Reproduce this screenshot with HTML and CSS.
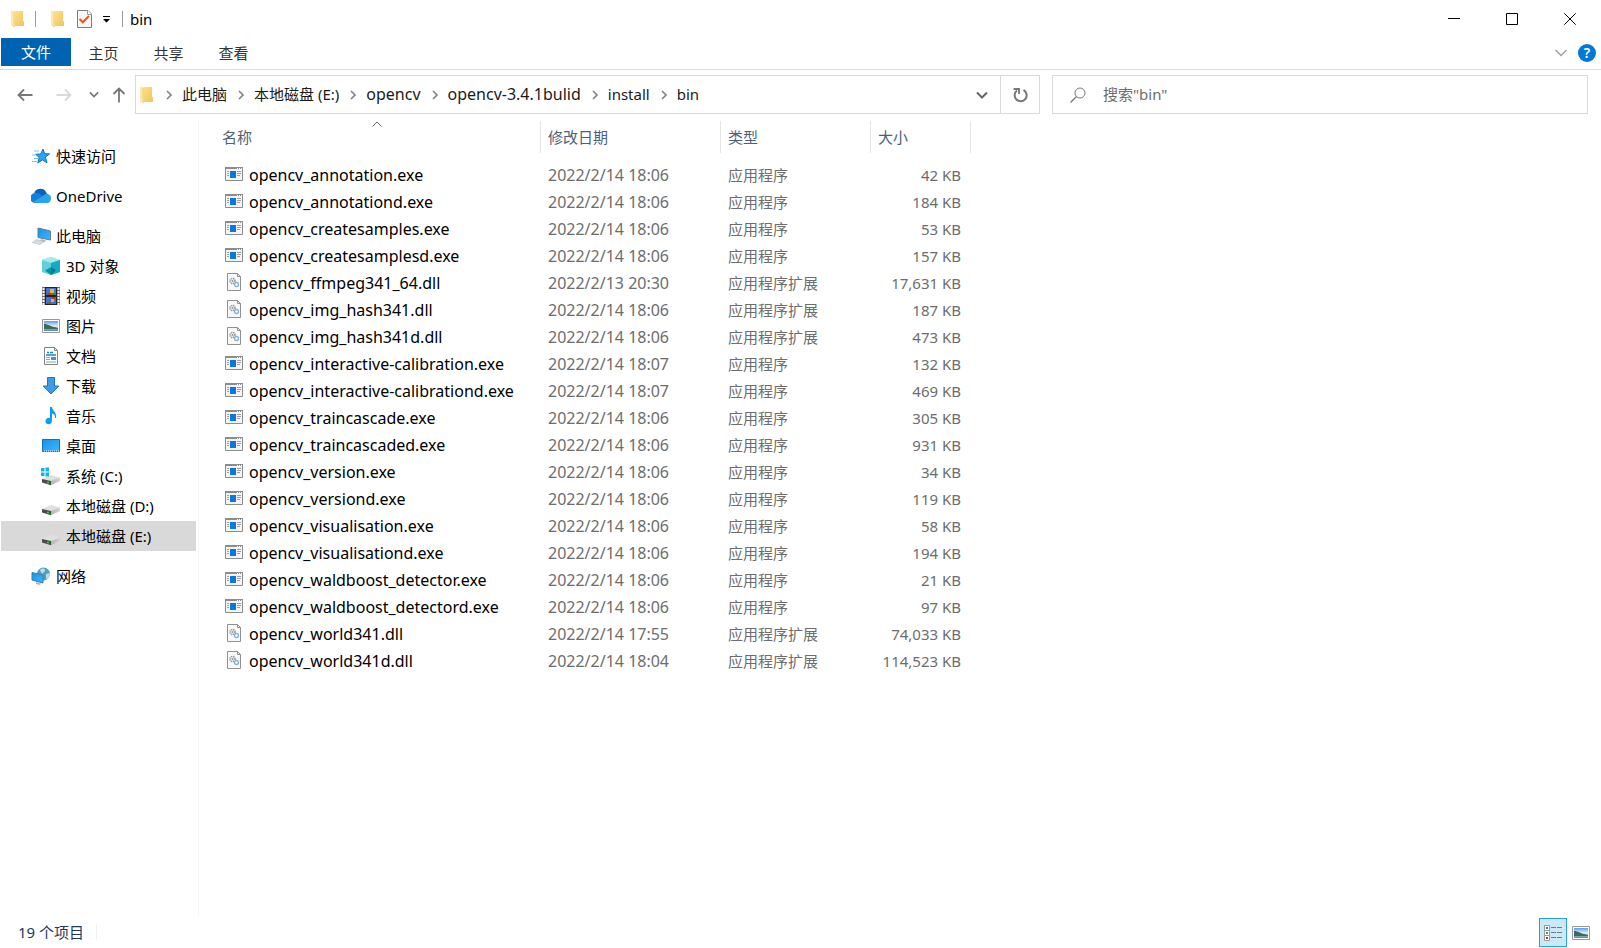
FILE: index.html
```html
<!DOCTYPE html>
<html lang="zh-CN">

<head>
    <meta charset="UTF-8">
    <meta name="viewport" content="width=device-width, initial-scale=1.0">
    <title>bin</title>
    <link rel="stylesheet" href="styles.css">
</head>

<body>
    <!-- 图标 -->
    <svg class="sprite" aria-hidden="true">
        <defs>
            <linearGradient id="gold" x1="0" x2="1" y2="1">
                <stop offset="0" stop-color="#ffe08a" />
                <stop offset="1" stop-color="#eec460" />
            </linearGradient>
            <linearGradient id="sky" x1="0" x2="1" y2="1">
                <stop offset="0" stop-color="#1590ee" />
                <stop offset="1" stop-color="#3fb8fb" />
            </linearGradient>
            <linearGradient id="metal" x1="0" x2="1">
                <stop offset="0" stop-color="#b5b5b5" />
                <stop offset="1" stop-color="#d2d2d2" />
            </linearGradient>
            <linearGradient id="view" x2="0" y2="1">
                <stop offset="0" stop-color="#5b9bea" />
                <stop offset="0.5" stop-color="#dff1fb" />
                <stop offset="1" stop-color="#4b86a8" />
            </linearGradient>
        </defs>
        <symbol id="folder" viewBox="0 0 13 18">
            <path d="M3 1h9v10l1 .6V16H3z" fill="url(#gold)" />
            <path d="M0 0l3.500 2v16L0 15.500z" fill="#ffe9a8" />
            <path d="M3 2v15" stroke="#e9c56c" stroke-width=".6" />
        </symbol>
        <symbol id="check" viewBox="0 0 15 18">
            <path d="M.5.5h10.500l3.500 3.500v13.500H.5z" fill="#f6f6f6" stroke="#7d7d7d" />
            <path d="M10.500.5v4h4" fill="#fff" stroke="#9a9a9a" />
            <path d="M2.500 9l3.300 3.300L12 6" fill="none" stroke="#f0590f" stroke-width="2" />
        </symbol>
        <symbol id="chev-right" viewBox="0 0 6 10">
            <path d="M1 1l4 4-4 4" fill="none" stroke="#858585" stroke-width="1.700" />
        </symbol>
        <symbol id="chev-down" viewBox="0 0 12 8">
            <path d="M1 1.500l5 5 5-5" fill="none" stroke="currentColor" stroke-width="2" />
        </symbol>
        <symbol id="arrow" viewBox="0 0 16 14">
            <path d="M15.500 7H1.500M7 1.500L1.500 7 7 12.500" fill="none" stroke="currentColor" stroke-width="1.800" />
        </symbol>
        <symbol id="star" viewBox="0 0 20 20">
            <path d="M12 3l1.600 4.700 5 .1-4.200 3.400 1.600 5.600-4.600-2.900-4.600 3.100 1.400-5.400-3.500-3.300 5-.3z" fill="#2ba2f3" stroke="#1076be" />
            <path d="M3 5h5M1 9h4M3 12.500h4M1 15.500h5" stroke="#7cc7f7" />
        </symbol>
        <symbol id="cloud" viewBox="0 0 20 20">
            <path d="M3 8a6.500 6.500 0 0 1 12.500-1l3.500 4-8 2-8-3z" fill="#0b62b8" />
            <path d="M4.500 17a5 5 0 0 1-.5-10c3-.6 5 .5 8 3l-6 7z" fill="#1180d6" />
            <path d="M2 16l10-6c2.500-3.500 8-2 8 2 0 3-1.500 5-4 5H4.500z" fill="#29a4ee" />
        </symbol>
        <symbol id="pc" viewBox="0 0 20 20">
            <path d="M7 2l12.500 3v9L7 11.500z" fill="url(#sky)" stroke="#5c7f98" />
            <path d="M10 13l5 1.500-1 1.500-5-1z" fill="#aeb8bf" />
            <path d="M6 13.500l7 2.500-4 2.500-8-2z" fill="#d5dadd" stroke="#b7bfc5" stroke-width=".6" />
        </symbol>
        <symbol id="cube" viewBox="0 0 20 20">
            <path d="M10 1l9 3v12l-9 3-9-3V4z" fill="#5fd0dc" />
            <path d="M10 1l9 3-9 3-9-3z" fill="#a6e8ee" />
            <path d="M19 4l-9 3v12l9-3z" fill="#12adc4" />
            <path d="M10 11l-6 3.500 6 4.500z" fill="#0a93a8" />
            <path d="M10 11l5 3-5 5z" fill="#067a90" />
        </symbol>
        <symbol id="film" viewBox="0 0 20 20">
            <path d="M1 1h18v18H1z" fill="#6b6b6b" />
            <path d="M2.500 2v17M17.500 2v17" stroke="#f4f4f4" stroke-width="2" stroke-dasharray="2 1" />
            <path d="M4 1h12v18H4z" fill="#222" />
            <path d="M5 2h10v7H5zM5 11h10v7H5z" fill="#4670d8" />
            <path d="M9 3h4v4H9zM10 13h3v3h-3z" fill="#e5b92b" />
            <path d="M6 7h4v2H6zM11 11h3v2h-3z" fill="#b5372b" />
            <path d="M11 7h3v2h-3zM6 16h4v2H6z" fill="#4c7740" />
        </symbol>
        <symbol id="photo" viewBox="0 0 20 20">
            <path d="M1.500 3.500h17v13h-17z" fill="#fff" stroke="#989898" />
            <path d="M3 5h14v10H3z" fill="url(#view)" />
            <path d="M3 8c3-.5 5 2 14 4v1H3z" fill="#3d6b58" />
        </symbol>
        <symbol id="doc" viewBox="0 0 20 20">
            <path d="M3.500 1.500h10l3 3v14h-13z" fill="#fff" stroke="#848484" />
            <path d="M13.500 1.500v3h3" fill="none" stroke="#848484" />
            <path d="M6 6.500h2M9 6.500h3M5 9h10" stroke="#1784cf" stroke-width="1.500" />
            <path d="M5 11.500h4M5 13.500h4M5 16h10" stroke="#8d9ca8" />
            <path d="M10 11h5v3h-5z" fill="#3f97c9" />
        </symbol>
        <symbol id="down" viewBox="0 0 20 20">
            <path d="M6.500 1.500h7V10h4.300L10 18 2.200 10h4.300z" fill="#3f9be9" stroke="#1f74bd" />
        </symbol>
        <symbol id="note" viewBox="0 0 20 20">
            <path d="M9 1h2c.5 4 5 5 4 11h-1c.3-3-1-4-3-4.500v7C11 20 4 19 4.500 15c.5-3 3-3.500 4.500-3z" fill="#0e9bf5" />
        </symbol>
        <symbol id="desk" viewBox="0 0 20 20">
            <path d="M1.500 3.500h17v12h-17z" fill="url(#sky)" stroke="#0b73bf" />
            <path d="M3 15h11M15 15h3" stroke="#fff" stroke-dasharray="1 1" />
        </symbol>
        <symbol id="disk" viewBox="0 0 20 20">
            <path d="M1 13L10 9l9 2.500L10 16z" fill="#e0e0e0" />
            <path d="M1 13l9 2v4.200L1 16.500z" fill="#4b4b4b" />
            <path d="M10 15l9-3.500v3.500l-9 4.200z" fill="url(#metal)" />
            <path d="M6 16.500h2" stroke="#35d648" stroke-width="1.500" />
        </symbol>
        <symbol id="windisk" viewBox="0 0 20 20">
            <use href="#disk" />
            <path d="M0 2h3.500v3.500H0zM4.500 1.500H8v4H4.500zM0 6.500h3.500V10H0zM4.500 6.500H8v4H4.500z" fill="#12b4ea" />
        </symbol>
        <symbol id="net" viewBox="0 0 20 20">
            <circle cx="12.500" cy="8" r="6.500" fill="#4f9cc4" />
            <path d="M9 4c3-3 6-1 5 1l-3 3zM15 8l4-1c0 4-2 6-4 6z" fill="#b9dcea" />
            <path d="M1 6.500l11 2.500v8L1 14z" fill="url(#sky)" stroke="#3a7fae" />
            <path d="M5 16l5 1.500-1 1.500-4-1z" fill="#adb6bc" />
        </symbol>
        <symbol id="exe" viewBox="0 0 18 14">
            <path d="M.5.5h17v13H.5z" fill="#f4f4f4" stroke="#8a8d90" />
            <path d="M0 1h18" stroke="#8a8d90" stroke-width="2" />
            <path d="M12 1.500h1M14 1.500h1M16 1.500h1" stroke="#fff" />
            <path d="M5 4h6v7H5z" fill="#0a78dc" />
            <path d="M2 4.500h2M2 6.500h2M2 8.500h2M12 4.500h4M12 6.500h4M12 8.500h3" stroke="#9da0a3" />
        </symbol>
        <symbol id="dll" viewBox="0 0 18 18">
            <path d="M2.500.5h10l3 3v14h-13z" fill="#f8f8f8" stroke="#909090" />
            <path d="M12.500.5v3h3" fill="none" stroke="#909090" />
            <circle cx="7.500" cy="8" r="2.500" fill="none" stroke="#8b969e" stroke-width="1.500" stroke-dasharray="1.300 .7" />
            <circle cx="7.500" cy="8" r="1" fill="#8b969e" />
            <circle cx="11.500" cy="11.500" r="2" fill="#fff" stroke="#86b1d0" stroke-width="1.300" />
        </symbol>
    </svg>

    <header class="titlebar">
        <svg class="folder"><use href="#folder" /></svg>
        <i class="line"></i>
        <button class="folder" aria-label="新建文件夹"><svg><use href="#folder" /></svg></button>
        <button class="check" aria-label="属性"><svg><use href="#check" /></svg></button>
        <button class="custom" aria-label="自定义快速访问工具栏">
            <svg viewBox="0 0 7 7"><path d="M0 0h7v1H0zM0 3h7L3.500 6.500z" /></svg>
        </button>
        <i class="line"></i>
        <h1>bin</h1>
        <div class="controls">
            <button aria-label="最小化"><svg viewBox="0 0 12 12"><path d="M0 5.500h12" /></svg></button>
            <button aria-label="最大化"><svg viewBox="0 0 12 12"><path d="M.5.5h11v11H.5z" /></svg></button>
            <button aria-label="关闭"><svg viewBox="0 0 12 12"><path d="M.3.3l11.400 11.400M11.700.3L.3 11.700" /></svg></button>
        </div>
    </header>

    <nav class="ribbon">
        <button class="file">文件</button>
        <button>主页</button>
        <button>共享</button>
        <button>查看</button>
        <div class="right">
            <button class="expand" aria-label="展开功能区">
                <svg viewBox="0 0 12 8"><path d="M.5 1L6 6.500 11.500 1" fill="none" stroke="#a0a0a0" stroke-width="1.500" /></svg>
            </button>
            <button class="help" aria-label="帮助">?</button>
        </div>
    </nav>

    <div class="navbar">
        <div class="history">
            <button class="back" aria-label="后退"><svg><use href="#arrow" /></svg></button>
            <button class="forward" aria-label="前进" disabled><svg><use href="#arrow" /></svg></button>
            <button class="recent" aria-label="最近浏览的位置"><svg><use href="#chev-down" /></svg></button>
            <button class="up" aria-label="上移"><svg><use href="#arrow" /></svg></button>
        </div>
        <div class="address">
            <svg class="folder"><use href="#folder" /></svg>
            <svg class="sep"><use href="#chev-right" /></svg>
            <a href="#">此电脑</a>
            <svg class="sep"><use href="#chev-right" /></svg>
            <a href="#">本地磁盘 (E:)</a>
            <svg class="sep"><use href="#chev-right" /></svg>
            <a href="#" class="latin">opencv</a>
            <svg class="sep"><use href="#chev-right" /></svg>
            <a href="#" class="latin">opencv-3.4.1bulid</a>
            <svg class="sep"><use href="#chev-right" /></svg>
            <a href="#">install</a>
            <svg class="sep"><use href="#chev-right" /></svg>
            <a href="#">bin</a>
            <button class="drop" aria-label="以前的位置"><svg><use href="#chev-down" /></svg></button>
            <button class="refresh" aria-label="刷新">
                <svg viewBox="0 0 16 16">
                    <path d="M11.500 3a6 6 0 1 1-6.500.5" fill="none" stroke="#777" stroke-width="2" />
                    <path d="M1.500 2H7v5" fill="none" stroke="#777" stroke-width="1.800" />
                </svg>
            </button>
        </div>
        <label class="search">
            <svg viewBox="0 0 16 16">
                <circle cx="10" cy="6" r="5" fill="none" stroke="#777" />
                <path d="M6.500 9.500L.5 15.500" stroke="#777" stroke-width="1.300" />
            </svg>
            <input type="text" placeholder='搜索"bin"' aria-label="搜索">
        </label>
    </div>

    <div class="content">
        <aside class="tree">
            <ul>
                <li><a href="#"><svg><use href="#star" /></svg>快速访问</a></li>
            </ul>
            <ul>
                <li><a href="#"><svg><use href="#cloud" /></svg>OneDrive</a></li>
            </ul>
            <ul>
                <li><a href="#"><svg><use href="#pc" /></svg>此电脑</a></li>
                <li class="sub"><a href="#"><svg><use href="#cube" /></svg>3D 对象</a></li>
                <li class="sub"><a href="#"><svg><use href="#film" /></svg>视频</a></li>
                <li class="sub"><a href="#"><svg><use href="#photo" /></svg>图片</a></li>
                <li class="sub"><a href="#"><svg><use href="#doc" /></svg>文档</a></li>
                <li class="sub"><a href="#"><svg><use href="#down" /></svg>下载</a></li>
                <li class="sub"><a href="#"><svg><use href="#note" /></svg>音乐</a></li>
                <li class="sub"><a href="#"><svg><use href="#desk" /></svg>桌面</a></li>
                <li class="sub"><a href="#"><svg><use href="#windisk" /></svg>系统 (C:)</a></li>
                <li class="sub"><a href="#"><svg><use href="#disk" /></svg>本地磁盘 (D:)</a></li>
                <li class="sub current"><a href="#"><svg><use href="#disk" /></svg>本地磁盘 (E:)</a></li>
            </ul>
            <ul>
                <li><a href="#"><svg><use href="#net" /></svg>网络</a></li>
            </ul>
        </aside>

        <main class="files">
            <table>
                <thead>
                    <tr>
                        <th class="name">名称<svg class="sort" viewBox="0 0 10 6"><path d="M.5 5.500L5 1l4.500 4.500" fill="none" stroke="#666" /></svg></th>
                        <th class="date">修改日期</th>
                        <th class="type">类型</th>
                        <th class="size">大小</th>
                    </tr>
                </thead>
                <tbody>
                    <tr><td><svg><use href="#exe" /></svg>opencv_annotation.exe</td><td>2022/2/14 18:06</td><td>应用程序</td><td>42 KB</td></tr>
                    <tr><td><svg><use href="#exe" /></svg>opencv_annotationd.exe</td><td>2022/2/14 18:06</td><td>应用程序</td><td>184 KB</td></tr>
                    <tr><td><svg><use href="#exe" /></svg>opencv_createsamples.exe</td><td>2022/2/14 18:06</td><td>应用程序</td><td>53 KB</td></tr>
                    <tr><td><svg><use href="#exe" /></svg>opencv_createsamplesd.exe</td><td>2022/2/14 18:06</td><td>应用程序</td><td>157 KB</td></tr>
                    <tr><td><svg class="dll"><use href="#dll" /></svg>opencv_ffmpeg341_64.dll</td><td>2022/2/13 20:30</td><td>应用程序扩展</td><td>17,631 KB</td></tr>
                    <tr><td><svg class="dll"><use href="#dll" /></svg>opencv_img_hash341.dll</td><td>2022/2/14 18:06</td><td>应用程序扩展</td><td>187 KB</td></tr>
                    <tr><td><svg class="dll"><use href="#dll" /></svg>opencv_img_hash341d.dll</td><td>2022/2/14 18:06</td><td>应用程序扩展</td><td>473 KB</td></tr>
                    <tr><td><svg><use href="#exe" /></svg>opencv_interactive-calibration.exe</td><td>2022/2/14 18:07</td><td>应用程序</td><td>132 KB</td></tr>
                    <tr><td><svg><use href="#exe" /></svg>opencv_interactive-calibrationd.exe</td><td>2022/2/14 18:07</td><td>应用程序</td><td>469 KB</td></tr>
                    <tr><td><svg><use href="#exe" /></svg>opencv_traincascade.exe</td><td>2022/2/14 18:06</td><td>应用程序</td><td>305 KB</td></tr>
                    <tr><td><svg><use href="#exe" /></svg>opencv_traincascaded.exe</td><td>2022/2/14 18:06</td><td>应用程序</td><td>931 KB</td></tr>
                    <tr><td><svg><use href="#exe" /></svg>opencv_version.exe</td><td>2022/2/14 18:06</td><td>应用程序</td><td>34 KB</td></tr>
                    <tr><td><svg><use href="#exe" /></svg>opencv_versiond.exe</td><td>2022/2/14 18:06</td><td>应用程序</td><td>119 KB</td></tr>
                    <tr><td><svg><use href="#exe" /></svg>opencv_visualisation.exe</td><td>2022/2/14 18:06</td><td>应用程序</td><td>58 KB</td></tr>
                    <tr><td><svg><use href="#exe" /></svg>opencv_visualisationd.exe</td><td>2022/2/14 18:06</td><td>应用程序</td><td>194 KB</td></tr>
                    <tr><td><svg><use href="#exe" /></svg>opencv_waldboost_detector.exe</td><td>2022/2/14 18:06</td><td>应用程序</td><td>21 KB</td></tr>
                    <tr><td><svg><use href="#exe" /></svg>opencv_waldboost_detectord.exe</td><td>2022/2/14 18:06</td><td>应用程序</td><td>97 KB</td></tr>
                    <tr><td><svg class="dll"><use href="#dll" /></svg>opencv_world341.dll</td><td>2022/2/14 17:55</td><td>应用程序扩展</td><td>74,033 KB</td></tr>
                    <tr><td><svg class="dll"><use href="#dll" /></svg>opencv_world341d.dll</td><td>2022/2/14 18:04</td><td>应用程序扩展</td><td>114,523 KB</td></tr>
                </tbody>
            </table>
        </main>
    </div>

    <footer class="status">
        <span>19 个项目</span>
        <div class="views">
            <button class="on" aria-label="详细信息">
                <svg viewBox="0 0 18 18">
                    <path d="M.5 1.500h5v5h-5zM.5 6.500h5v5h-5zM.5 11.500h5v5h-5z" fill="#fff" stroke="#999" />
                    <path d="M2 4h2" stroke="#2f76a8" stroke-width="2" />
                    <path d="M2 9h2" stroke="#5d8f3a" stroke-width="2" />
                    <path d="M2 14h2" stroke="#b3302a" stroke-width="2" />
                    <path d="M7 3.500h5M13 3.500h5M7 8.500h5M13 8.500h5M7 13.500h5M13 13.500h5" stroke="#767680" />
                </svg>
            </button>
            <button aria-label="大缩略图"><svg class="thumb"><use href="#photo" /></svg></button>
        </div>
    </footer>
</body>

</html>
```
FILE: styles.css
```css
* {
    margin: 0;
    padding: 0;
    box-sizing: border-box;
}

body {
    display: flex;
    flex-direction: column;
    height: 100vh;
    background-color: #fff;
    color: #000;
    font-family: "Noto Sans", "Noto Sans CJK SC", sans-serif;
    font-size: 15px;
    line-height: 20px;
}

li {
    list-style: none;
}

a {
    color: inherit;
    text-decoration: none;
}

button,
input {
    border: 0;
    outline: none;
    background: none;
    color: inherit;
    font: inherit;
}

svg {
    display: block;
    flex: none;
}

button {
    display: flex;
    align-items: center;
    justify-content: center;
}

.sprite {
    position: absolute;
    width: 0;
    height: 0;
}

.folder,
.folder svg {
    width: 13px;
    height: 18px;
}

/* 标题栏 */
.titlebar {
    display: flex;
    align-items: center;
    height: 38px;
    padding-left: 11px;
}

.line {
    width: 1px;
    height: 16px;
    margin: 0 15px 0 11px;
    background-color: #999;
}

.check {
    margin: 0 11px 0 13px;
}

.check svg {
    width: 15px;
    height: 18px;
}

.custom svg {
    width: 7px;
    height: 7px;
}

.custom + .line {
    margin: 0 7px 0 12px;
}

h1 {
    font-size: 15px;
    font-weight: 400;
}

.controls {
    display: flex;
    margin-left: auto;
    margin-right: 2px;
}

.controls button {
    width: 58px;
    height: 38px;
}

.controls svg {
    width: 12px;
    height: 12px;
    fill: none;
    stroke: #000;
}

/* 功能区 */
.ribbon {
    display: flex;
    height: 32px;
    padding-left: 1px;
    border-bottom: 1px solid #dadbdc;
    color: #333;
}

.ribbon > button {
    width: 65px;
    height: 30px;
}

.ribbon .file {
    width: 70px;
    height: 28px;
    background-color: #0063b1;
    color: #fff;
}

.right {
    display: flex;
    align-items: center;
    gap: 11px;
    height: 30px;
    margin-left: auto;
    padding-right: 5px;
}

.expand svg {
    width: 12px;
    height: 8px;
}

.help {
    width: 18px;
    height: 18px;
    border-radius: 50%;
    background-color: #0078d7;
    color: #fff;
    font-size: 14px;
    font-weight: 600;
}

/* 地址栏 */
.navbar {
    display: flex;
    padding: 5px 13px 7px 17px;
    color: #1a1a1a;
}

.history {
    display: flex;
    align-items: center;
    width: 118px;
    color: #777;
}

.history svg {
    width: 16px;
    height: 14px;
}

.forward {
    margin: 0 17px 0 23px;
    color: #d9d9d9;
}

.forward svg {
    transform: rotate(180deg);
}

.history .recent svg {
    width: 10px;
    height: 7px;
}

.up {
    margin-left: 12px;
}

.up svg {
    transform: rotate(90deg);
}

.address {
    display: flex;
    flex: 1;
    align-items: center;
    height: 39px;
    padding-left: 4px;
    border: 1px solid #d9d9d9;
    white-space: nowrap;
}

.address a,
.search input {
    padding-bottom: 2px;
}

.sep {
    width: 6px;
    height: 10px;
    margin: 0 10px 0 11px;
}

.address .folder + .sep {
    margin-left: 13px;
}

.latin {
    font-size: 16px;
}

.drop {
    width: 36px;
    height: 37px;
    margin-left: auto;
    color: #666;
}

.drop svg {
    width: 12px;
    height: 8px;
}

.refresh {
    width: 39px;
    height: 37px;
    border-left: 1px solid #d9d9d9;
}

.refresh svg {
    width: 16px;
    height: 16px;
}

.search {
    display: flex;
    flex: 0 0 536px;
    align-items: center;
    gap: 17px;
    height: 39px;
    margin-left: 12px;
    padding-left: 17px;
    border: 1px solid #d9d9d9;
}

.search svg {
    width: 16px;
    height: 16px;
}

.search input {
    flex: 1;
}

.search input::placeholder {
    color: #6d6d6d;
}

/* 主体 */
.content {
    display: flex;
    flex: 1;
    min-height: 0;
}

.tree {
    width: 199px;
    padding: 20px 2px 0 1px;
    border-right: 1px solid #f5f5f5;
}

.tree ul {
    margin-bottom: 10px;
}

.tree a {
    display: flex;
    align-items: center;
    gap: 5px;
    height: 30px;
    padding-left: 30px;
}

.tree svg {
    width: 20px;
    height: 20px;
}

.tree .sub a {
    padding-left: 40px;
}

.current {
    background-color: #d9d9d9;
}

.files {
    flex: 1;
    padding-left: 15px;
    overflow: auto;
}

table {
    width: 757px;
    table-layout: fixed;
    border-collapse: separate;
    border-spacing: 0;
}

th {
    height: 32px;
    padding: 0 0 1px 7px;
    border-right: 1px solid #e5e5e5;
    color: #4c607a;
    font-weight: 400;
    text-align: left;
}

.name {
    position: relative;
    width: 327px;
    padding-left: 8px;
}

.date {
    width: 180px;
}

.type {
    width: 150px;
}

.size {
    width: 100px;
}

.sort {
    position: absolute;
    top: 0;
    left: 50%;
    width: 10px;
    height: 6px;
    margin-left: -5px;
}

tbody::before {
    content: "";
    display: block;
    height: 8px;
}

td {
    height: 27px;
    padding-left: 7px;
    color: #6d6d6d;
    white-space: nowrap;
}

td:first-child {
    display: flex;
    align-items: center;
    gap: 6px;
    padding-left: 11px;
    color: #000;
    font-size: 16px;
}

td:nth-child(2) {
    font-size: 16px;
}

td:last-child {
    padding-right: 10px;
    text-align: right;
}

td svg {
    width: 18px;
    height: 14px;
    margin-bottom: 2px;
}

td .dll {
    height: 18px;
}

/* 状态栏 */
.status {
    display: flex;
    align-items: center;
    height: 31px;
    padding: 0 6px 0 18px;
    color: #1e395b;
}

.status span {
    margin-bottom: 2px;
    padding-right: 12px;
    border-right: 1px solid #f0f0f0;
    line-height: 16px;
}

.views {
    display: flex;
    margin-left: auto;
}

.views button {
    width: 28px;
    height: 29px;
}

.views .on {
    border: 1px solid #26a0da;
    background-color: #cbe8f6;
}

.views svg {
    width: 18px;
    height: 18px;
}

.views .thumb {
    width: 20px;
    height: 20px;
}
```
